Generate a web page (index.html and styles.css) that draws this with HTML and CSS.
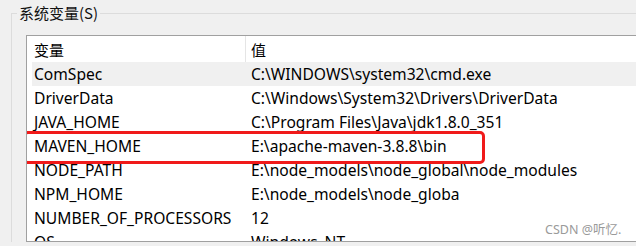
FILE: index.html
```html
<!DOCTYPE html>
<html lang="zh-CN">
<head>
    <meta charset="UTF-8">
    <title>系统变量</title>
    <link rel="stylesheet" href="styles.css">
</head>
<body>
    <fieldset class="group">
        <legend>系统变量(S)</legend>
        <div class="list">
            <div class="row head">
                <div class="cell name">变量</div>
                <div class="cell">值</div>
            </div>
            <div class="row hover">
                <div class="cell name">ComSpec</div>
                <div class="cell">C:\WINDOWS\system32\cmd.exe</div>
            </div>
            <div class="row">
                <div class="cell name">DriverData</div>
                <div class="cell">C:\Windows\System32\Drivers\DriverData</div>
            </div>
            <div class="row">
                <div class="cell name">JAVA_HOME</div>
                <div class="cell">C:\Program Files\Java\jdk1.8.0_351</div>
            </div>
            <div class="row marked">
                <div class="cell name">MAVEN_HOME</div>
                <div class="cell">E:\apache-maven-3.8.8\bin</div>
                <div class="mark"></div>
            </div>
            <div class="row">
                <div class="cell name">NODE_PATH</div>
                <div class="cell">E:\node_models\node_global\node_modules</div>
            </div>
            <div class="row">
                <div class="cell name">NPM_HOME</div>
                <div class="cell">E:\node_models\node_globa</div>
            </div>
            <div class="row">
                <div class="cell name">NUMBER_OF_PROCESSORS</div>
                <div class="cell">12</div>
            </div>
            <div class="row">
                <div class="cell name">OS</div>
                <div class="cell">Windows_NT</div>
            </div>
        </div>
    </fieldset>
    <div class="watermark">CSDN @听忆.</div>
</body>
</html>
```

FILE: styles.css
```css
body {
    margin: 0;
    width: 636px;
    height: 246px;
    overflow: hidden;
    position: relative;
    background: #f0f0f0;
    font-family: "Noto Sans", "Noto Sans CJK SC", sans-serif;
    color: #000;
}
.group {
    margin: 0 0 0 11px;
    padding: 9px 0 0 14px;
    width: 700px;
    min-width: 0;
    border: 1px solid #dcdcdc;
    border-right: none;
    border-bottom: none;
}
.group legend {
    margin-left: -9px;
    padding: 0 2px;
    font-family: "Noto Sans CJK SC", sans-serif;
    font-size: 15px;
    line-height: 26px;
    color: #111;
}
.list {
    height: 205px;
    overflow: hidden;
    background: #fff;
    border: 1px solid #a0a0a0;
    font-size: 15.6px;
}
.row {
    position: relative;
    display: grid;
    grid-template-columns: 218px 1fr;
    height: 24px;
    line-height: 25px;
    white-space: nowrap;
}
.row .cell {
    padding-left: 6px;
}
.row .name {
    padding-left: 7px;
}
.head {
    height: 26px;
    line-height: 28px;
    font-family: "Noto Sans CJK SC", sans-serif;
    font-size: 15px;
}
.head .name {
    border-right: 1px solid #e5e5e5;
    margin-right: -1px;
}
.hover {
    margin-left: 5px;
    background: #f0f0f0;
    grid-template-columns: 213px 1fr;
}
.hover .name {
    padding-left: 2px;
}
.mark {
    position: absolute;
    left: -4px;
    top: -3px;
    width: 456px;
    height: 27px;
    border: 3px solid #f01a1a;
    border-radius: 5px;
}
.watermark {
    position: absolute;
    left: 545px;
    top: 221px;
    font-size: 12.5px;
    line-height: 18px;
    color: #9a9a9a;
    text-shadow: 0 0 2px #fff;
}
```
